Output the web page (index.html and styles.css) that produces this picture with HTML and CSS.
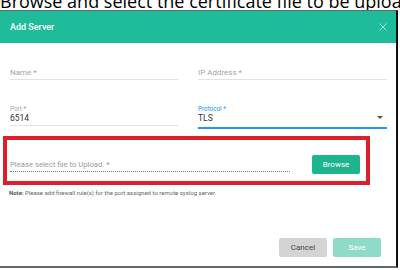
FILE: index.html
```html
<!DOCTYPE html>
<html>
<head>
<meta charset="utf-8">
<link rel="stylesheet" href="styles.css">
</head>
<body>
<div class="caption">Browse and select the certificate file to be uploaded</div>
<div class="dialog">
  <div class="dlg-head">
    <span class="dlg-title">Add Server</span>
    <svg class="close" width="8" height="8" viewBox="0 0 8 8"><path d="M0.5 0.5L7.5 7.5M7.5 0.5L0.5 7.5" stroke="#ffffff" stroke-opacity="0.6" stroke-width="1" fill="none"/></svg>
  </div>
  <div class="dlg-body">
    <div class="grid">
      <div class="field"><span class="ph">Name *</span></div>
      <div class="field"><span class="ph">IP Address *</span></div>
      <div class="field filled"><span class="lbl">Port *</span><span class="val">6514</span></div>
      <div class="field filled focus"><span class="lbl">Protocol *</span><span class="val">TLS</span><svg class="caret" width="6" height="3" viewBox="0 0 6 3"><path d="M0 0H6L3 3Z" fill="#555"/></svg></div>
    </div>
    <div class="highlight">
      <div class="file-input">Please select file to Upload. *</div>
      <button class="btn browse">Browse</button>
    </div>
    <p class="note"><b>Note:</b> Please add firewall rule(s) for the port assigned to remote syslog server.</p>
    <div class="actions">
      <button class="btn cancel">Cancel</button>
      <button class="btn save">Save</button>
    </div>
  </div>
</div>
</body>
</html>
```
FILE: styles.css
```css
html, body {
  margin: 0;
  padding: 0;
  background: #ffffff;
}
body {
  width: 400px;
  height: 270px;
  overflow: hidden;
  font-family: Roboto, "Liberation Sans", sans-serif;
}
.caption {
  font-family: "Open Sans", "Liberation Sans", sans-serif;
  font-size: 18px;
  line-height: 18px;
  color: #000;
  white-space: nowrap;
  overflow: hidden;
  margin-top: -8px;
  height: 18px;
}
.dialog {
  box-sizing: border-box;
  width: 398px;
  height: 258px;
  border-top: 1px solid #666;
  border-right: 2px solid #111;
  border-bottom: 2px solid #666;
  background: #fff;
}
.dlg-head {
  height: 32px;
  background: #1ebc9a;
  display: flex;
  align-items: center;
  justify-content: space-between;
  padding: 0 9px 0 10px;
}
.dlg-title {
  color: #fff;
  font-size: 9px;
  font-weight: 500;
}
.close {
  display: block;
}
.dlg-body {
  padding: 0 10px;
}
.grid {
  display: grid;
  grid-template-columns: 168px 189px;
  column-gap: 20px;
  row-gap: 26px;
  padding-top: 25px;
  align-items: start;
}
.field {
  position: relative;
  border-bottom: 1px solid #e2e2e2;
  padding-bottom: 1px;
}
.ph {
  display: block;
  font-size: 8px;
  line-height: 10px;
  color: #a3a3a3;
}
.field.filled {
  padding-bottom: 2px;
}
.lbl {
  display: block;
  font-size: 6.3px;
  line-height: 7px;
  color: #a3a3a3;
}
.val {
  display: block;
  font-size: 8.5px;
  line-height: 10px;
  color: #333;
}
.field.focus {
  border-bottom: 2px solid #2196f3;
  padding-bottom: 4px;
}
.field.focus .lbl {
  color: #2196f3;
}
.caret {
  position: absolute;
  right: 4px;
  top: 10px;
}
.highlight {
  margin: 7px 0 0 -7px;
  width: 367px;
  height: 49px;
  box-sizing: border-box;
  border: 4px solid #dc1f2a;
  display: flex;
  align-items: flex-end;
  padding: 0 6px 7px 3px;
}
.file-input {
  width: 280px;
  font-size: 7.7px;
  line-height: 10px;
  color: #9a9a9a;
  padding-bottom: 1px;
  border-bottom: 1px dotted #777;
  margin-bottom: 2px;
}
.btn {
  border: none;
  border-radius: 2px;
  height: 19px;
  width: 48px;
  padding: 0;
  font-family: Roboto, "Liberation Sans", sans-serif;
  font-size: 8px;
}
.browse {
  margin-left: auto;
  background: #1db48e;
  color: #fff;
}
.note {
  margin: 4px 0 0 -1px;
  font-size: 6px;
  line-height: 8px;
  color: #666;
}
.note b {
  font-weight: 700;
  color: #555;
}
.actions {
  display: flex;
  justify-content: flex-end;
  gap: 6px;
  margin-top: 41px;
  padding-right: 5px;
}
.cancel {
  background: #d4d4d4;
  color: #444;
}
.save {
  background: #8edcc8;
  color: #fff;
}
```
